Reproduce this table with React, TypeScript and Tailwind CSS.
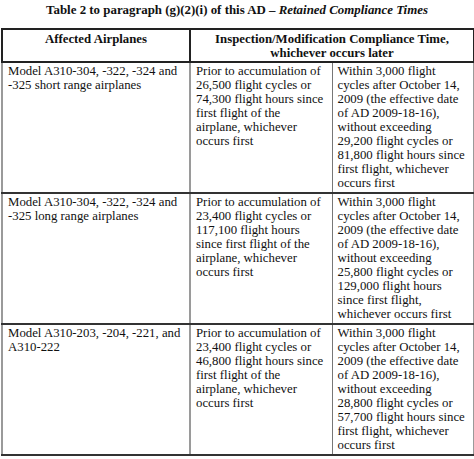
import React from "react";

const rows = [
  {
    a: "Model A310-304, -322, -324 and -325 short range airplanes",
    b: "Prior to accumulation of 26,500 flight cycles or 74,300 flight hours since first flight of the airplane, whichever occurs first",
    c: "Within 3,000 flight cycles after October 14, 2009 (the effective date of AD 2009-18-16), without exceeding 29,200 flight cycles or 81,800 flight hours since first flight, whichever occurs first",
  },
  {
    a: "Model A310-304, -322, -324 and -325 long range airplanes",
    b: "Prior to accumulation of 23,400 flight cycles or 117,100 flight hours since first flight of the airplane, whichever occurs first",
    c: "Within 3,000 flight cycles after October 14, 2009 (the effective date of AD 2009-18-16), without exceeding 25,800 flight cycles or 129,000 flight hours since first flight, whichever occurs first",
  },
  {
    a: "Model A310-203, -204, -221, and A310-222",
    b: "Prior to accumulation of 23,400 flight cycles or 46,800 flight hours since first flight of the airplane, whichever occurs first",
    c: "Within 3,000 flight cycles after October 14, 2009 (the effective date of AD 2009-18-16), without exceeding 28,800 flight cycles or 57,700 flight hours since first flight, whichever occurs first",
  },
];

export default function App() {
  return (
    <div className="w-[474px] h-[459px] bg-white text-[#111] overflow-hidden font-['Liberation_Serif','Times_New_Roman',serif]">
      <div className="pt-[3px] text-center font-bold text-[12.9px] leading-[14px]">
        Table 2 to paragraph (g)(2)(i) of this AD – <i>Retained Compliance Times</i>
      </div>
      <div className="pl-[1px] pt-[11px]">
        <table className="border-collapse w-[472px] table-fixed text-[12.8px] leading-[14px]">
          <colgroup>
            <col className="w-[188px]" />
            <col className="w-[142px]" />
            <col className="w-[142px]" />
          </colgroup>
          <thead>
            <tr>
              <th className="border-2 border-[#222] align-top font-bold text-center px-[5px] pt-[2px] pb-[1px]">
                Affected Airplanes
              </th>
              <th
                colSpan={2}
                className="border-2 border-[#222] align-top font-bold text-center px-[5px] pt-[2px] pb-[1px]"
              >
                Inspection/Modification Compliance Time, whichever occurs later
              </th>
            </tr>
          </thead>
          <tbody>
            {rows.map((r, i) => (
              <tr key={i}>
                <td className="border-x-2 border-x-[#9a9a9a] border-y-2 border-y-[#333] align-top pl-[5px] pr-[4px] pt-[1px] pb-[2px]">
                  {r.a}
                </td>
                <td className="border-x border-x-[#777] border-y-2 border-y-[#333] align-top pl-[5px] pr-[4px] pt-[1px] pb-[2px]">
                  {r.b}
                </td>
                <td className="border-l border-l-[#777] border-r-2 border-r-[#9a9a9a] border-y-2 border-y-[#333] align-top pl-[5px] pr-[3px] pt-[1px] pb-[2px]">
                  {r.c}
                </td>
              </tr>
            ))}
          </tbody>
        </table>
      </div>
    </div>
  );
}
